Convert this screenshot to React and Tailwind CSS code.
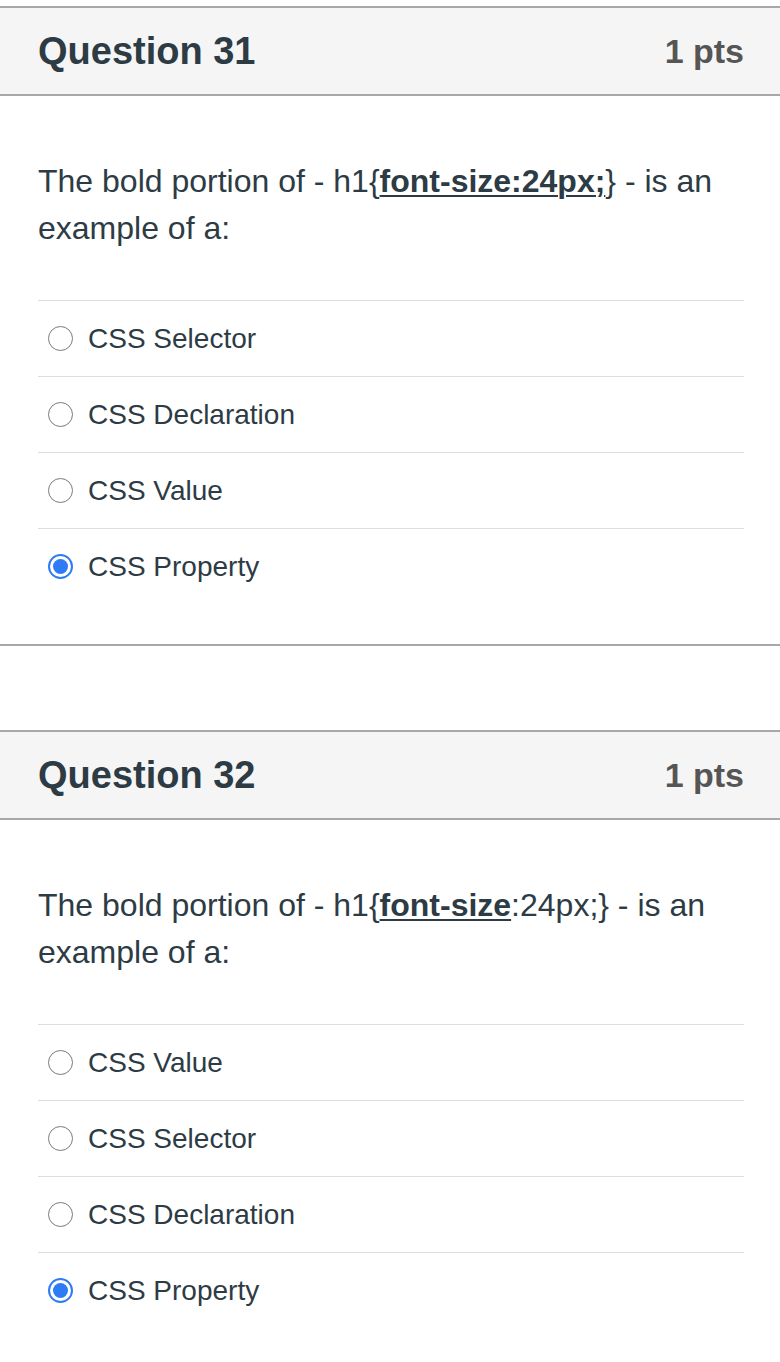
const QUESTIONS = [
  {
    num: 31,
    before: 'h1{',
    bold: 'font-size:24px;',
    after: '}',
    answers: ['CSS Selector', 'CSS Declaration', 'CSS Value', 'CSS Property'],
    picked: 3,
  },
  {
    num: 32,
    before: 'h1{',
    bold: 'font-size',
    after: ':24px;}',
    answers: ['CSS Value', 'CSS Selector', 'CSS Declaration', 'CSS Property'],
    picked: 3,
  },
];

function Radio({ checked }) {
  if (checked) {
    return (
      <span className="w-[25px] h-[25px] rounded-full border-[2.5px] border-[#2f7bf5] flex items-center justify-center shrink-0">
        <span className="w-[15px] h-[15px] rounded-full bg-[#2f7bf5]" />
      </span>
    );
  }
  return <span className="w-[25px] h-[25px] rounded-full border-[1.5px] border-[#7a7a7a] bg-white shrink-0" />;
}

function QuestionCard({ q }) {
  return (
    <div className="border-y-2 border-[#a8a8a8]">
      <div className="h-[88px] bg-[#f5f5f5] border-b-2 border-[#a8a8a8] pl-[38px] pr-[36px] flex items-center justify-between">
        <h2 className="text-[38px] font-bold text-[#2d3b45]">Question {q.num}</h2>
        <span className="text-[34px] font-bold text-[#555555]">1 pts</span>
      </div>
      <div className="pl-[38px] pr-[36px] pt-[62px] pb-[40px]">
        <p className="text-[32px] leading-[47px] text-[#2d3b45]">
          The bold portion of - {q.before}
          <strong className="underline underline-offset-[3px] decoration-2">{q.bold}</strong>
          {q.after} - is an example of a:
        </p>
        <div className="mt-[48px]">
          {q.answers.map((a, i) => (
            <div key={a} className="h-[76px] border-t border-[#dddddd] flex items-center gap-[15px] pl-[10px]">
              <Radio checked={i === q.picked} />
              <span className="text-[28px] text-[#2d3b45]">{a}</span>
            </div>
          ))}
        </div>
      </div>
    </div>
  );
}

export default function App() {
  return (
    <div className="bg-white min-h-screen pt-[6px] font-['Liberation_Sans',Arial,sans-serif]">
      <div className="flex flex-col gap-[84px]">
        {QUESTIONS.map(q => (
          <QuestionCard key={q.num} q={q} />
        ))}
      </div>
    </div>
  );
}
